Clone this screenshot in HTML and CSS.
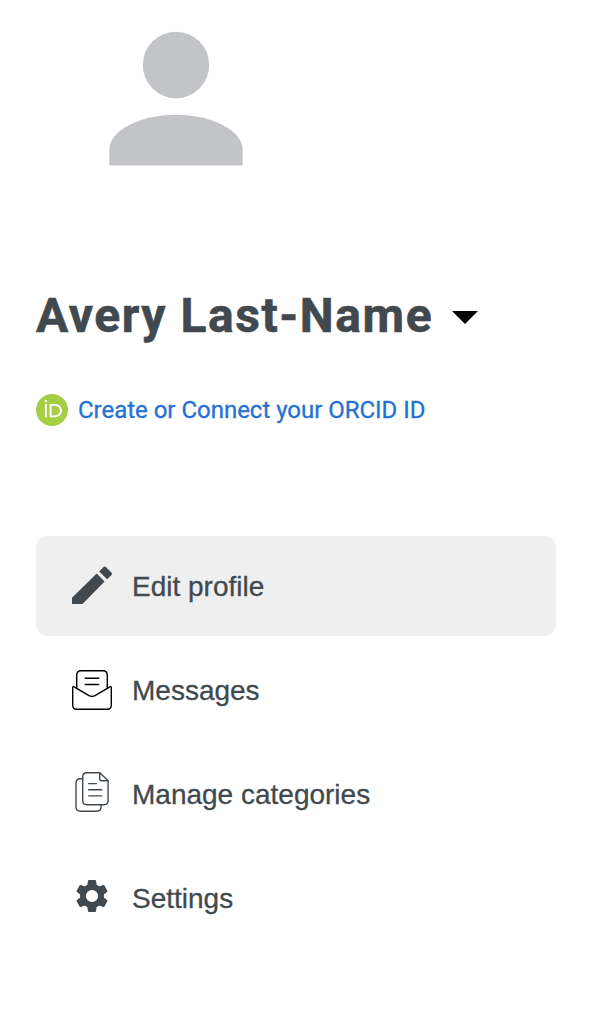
FILE: index.html
```html
<!DOCTYPE html>
<html lang="en">
<head>
    <meta charset="UTF-8">
    <meta name="viewport" content="width=device-width, initial-scale=1.0">
    <title>User Profile</title>
    <link rel="stylesheet" href="styles.css">
</head>
<body>
    <aside class="profile-sidebar">
        <!-- Profile picture placeholder -->
        <svg class="profile-picture" viewBox="0 0 134 134">
            <circle cx="67" cy="33" r="33.2"/>
            <path d="M.3 133.400v-16C.3 99 30 82.700 67 82.700s66.600 16.300 66.600 34.700v16z"/>
        </svg>

        <h1 class="profile-name">
            <span class="name-text">Avery Last-Name</span>
            <span class="caret"></span>
        </h1>

        <a class="orcid-link" href="#">
            <svg class="orcid-icon" viewBox="0 0 256 256">
                <circle cx="128" cy="128" r="128" fill="#a6ce45"/>
                <g fill="#fff">
                    <path d="M70.900 79.100h15.400v107.100H70.900z"/>
                    <path d="M108.900 79.100h41.600c39.600 0 57 28.300 57 53.600 0 27.500-21.500 53.600-56.800 53.600h-41.800zm15.400 93.300h24.500c34.900 0 42.900-26.500 42.900-39.700 0-21.500-13.700-39.700-43.700-39.700h-23.700z"/>
                    <circle cx="78.600" cy="56.800" r="10.100"/>
                </g>
            </svg>
            <span class="orcid-text">Create or Connect your ORCID ID</span>
        </a>

        <nav class="menu">
            <a class="menu-item active" href="#">
                <svg class="menu-icon" viewBox="0 0 40 40" fill="#41494f">
                    <path d="M0 38v-6.200L24.700 7.500l7.900 7.900L10.500 38z"/>
                    <path d="M27.200 5.400l4.100-4.200q1.400-1.300 2.800 0l5.200 5.200q1.300 1.400 0 2.800l-4.200 4.100z"/>
                </svg>
                <span class="menu-label">Edit profile</span>
            </a>
            <a class="menu-item" href="#">
                <svg class="menu-icon" viewBox="0 0 40 40" fill="none" stroke="#000" stroke-width="1.4" stroke-linecap="round" stroke-linejoin="round">
                    <path d="M4.700 18.300V5.200q0-4.500 4.500-4.500h21.600q4.500 0 4.500 4.500v13.100"/>
                    <path d="M4.700 18.300L1.800 16.600Q.7 16.300.7 17.800v17.500q0 4 4 4h30.600q4 0 4-4V17.800q0-1.500-1.100-1.200l-2.900 1.700L23 25.700q-3 1.500-6 0z"/>
                    <path d="M13.300 8.200h13.400M13.300 14.500h13.400"/>
                </svg>
                <span class="menu-label">Messages</span>
            </a>
            <a class="menu-item" href="#">
                <svg class="menu-icon raised" viewBox="0 0 40 40" fill="none" stroke="#41494f" stroke-width="1.4" stroke-linecap="round" stroke-linejoin="round">
                    <path d="M10.700 6.800H8.200q-4.200 0-4.200 4.200v24.100q0 4.200 4.200 4.200h16.700q4.200 0 4.200-4.200v-2.300"/>
                    <path d="M27.700.7H14.900q-4.200 0-4.200 4.200v23.700q0 4.200 4.200 4.200h17q4.200 0 4.200-4.200V8.800z"/>
                    <path d="M27.700.7v5.700q0 2.400 2.400 2.400h6"/>
                    <path d="M16.700 11.600h7.600M16.700 17.700h13M16.700 23.900h13"/>
                </svg>
                <span class="menu-label">Manage categories</span>
            </a>
            <a class="menu-item" href="#">
                <svg class="menu-icon raised" viewBox="0 0 40 40" fill="#41494f">
                    <defs>
                        <path id="tooth" d="M16 4.800q.1-.8.900-.8h6.200q.8 0 .9.800l1 6.400H15z"/>
                    </defs>
                    <circle cx="20" cy="20" r="9" fill="none" stroke="#41494f" stroke-width="5.800"/>
                    <use href="#tooth"/>
                    <use href="#tooth" transform="rotate(60 20 20)"/>
                    <use href="#tooth" transform="rotate(120 20 20)"/>
                    <use href="#tooth" transform="rotate(180 20 20)"/>
                    <use href="#tooth" transform="rotate(240 20 20)"/>
                    <use href="#tooth" transform="rotate(300 20 20)"/>
                </svg>
                <span class="menu-label">Settings</span>
            </a>
        </nav>
    </aside>
</body>
</html>
```

FILE: styles.css
```css
* {
    margin: 0;
    padding: 0;
    box-sizing: border-box;
}

body {
    background-color: #fff;
    color: #41494f;
    font-family: Roboto, sans-serif;
}

a {
    text-decoration: none;
}

.profile-sidebar {
    display: flex;
    flex-direction: column;
    align-items: flex-start;
    width: 556px;
    padding: 32px 0 0 36px;
}

.profile-picture {
    width: 134px;
    height: 134px;
    margin-left: 73px;
    fill: #c3c4c8;
    overflow: visible;
}

.profile-name {
    display: flex;
    align-items: center;
    height: 60px;
    margin-top: 120px;
    font-size: 48px;
    font-weight: 700;
    line-height: 60px;
    letter-spacing: 1.57px;
    white-space: nowrap;
    -webkit-text-stroke: 0.6px #41494f;
}

.caret {
    margin: 2px 0 0 19px;
    border-top: 13px solid #000;
    border-right: 13px solid transparent;
    border-left: 13px solid transparent;
}

.orcid-link {
    display: flex;
    align-items: center;
    gap: 10px;
    height: 32px;
    margin-top: 48px;
    color: #2371d5;
    font-size: 24px;
    line-height: 32px;
    letter-spacing: -0.02px;
    white-space: nowrap;
}

.orcid-icon {
    width: 32px;
    height: 32px;
}

.orcid-text {
    -webkit-text-stroke: 0.3px #2371d5;
}

.menu {
    display: flex;
    flex-direction: column;
    gap: 4px;
    width: 100%;
    margin-top: 110px;
}

.menu-item {
    display: flex;
    align-items: center;
    gap: 20px;
    height: 100px;
    padding: 0 36px;
    border-radius: 12px;
    color: #41494f;
    font-family: "Liberation Sans", sans-serif;
    font-size: 28px;
}

.menu-item.active {
    background-color: #efefef;
}

.menu-icon {
    width: 40px;
    height: 40px;
}

.menu-icon.raised {
    margin-bottom: 4px;
}

.menu-label {
    padding-top: 2px;
    -webkit-text-stroke: 0.3px #41494f;
}
```
